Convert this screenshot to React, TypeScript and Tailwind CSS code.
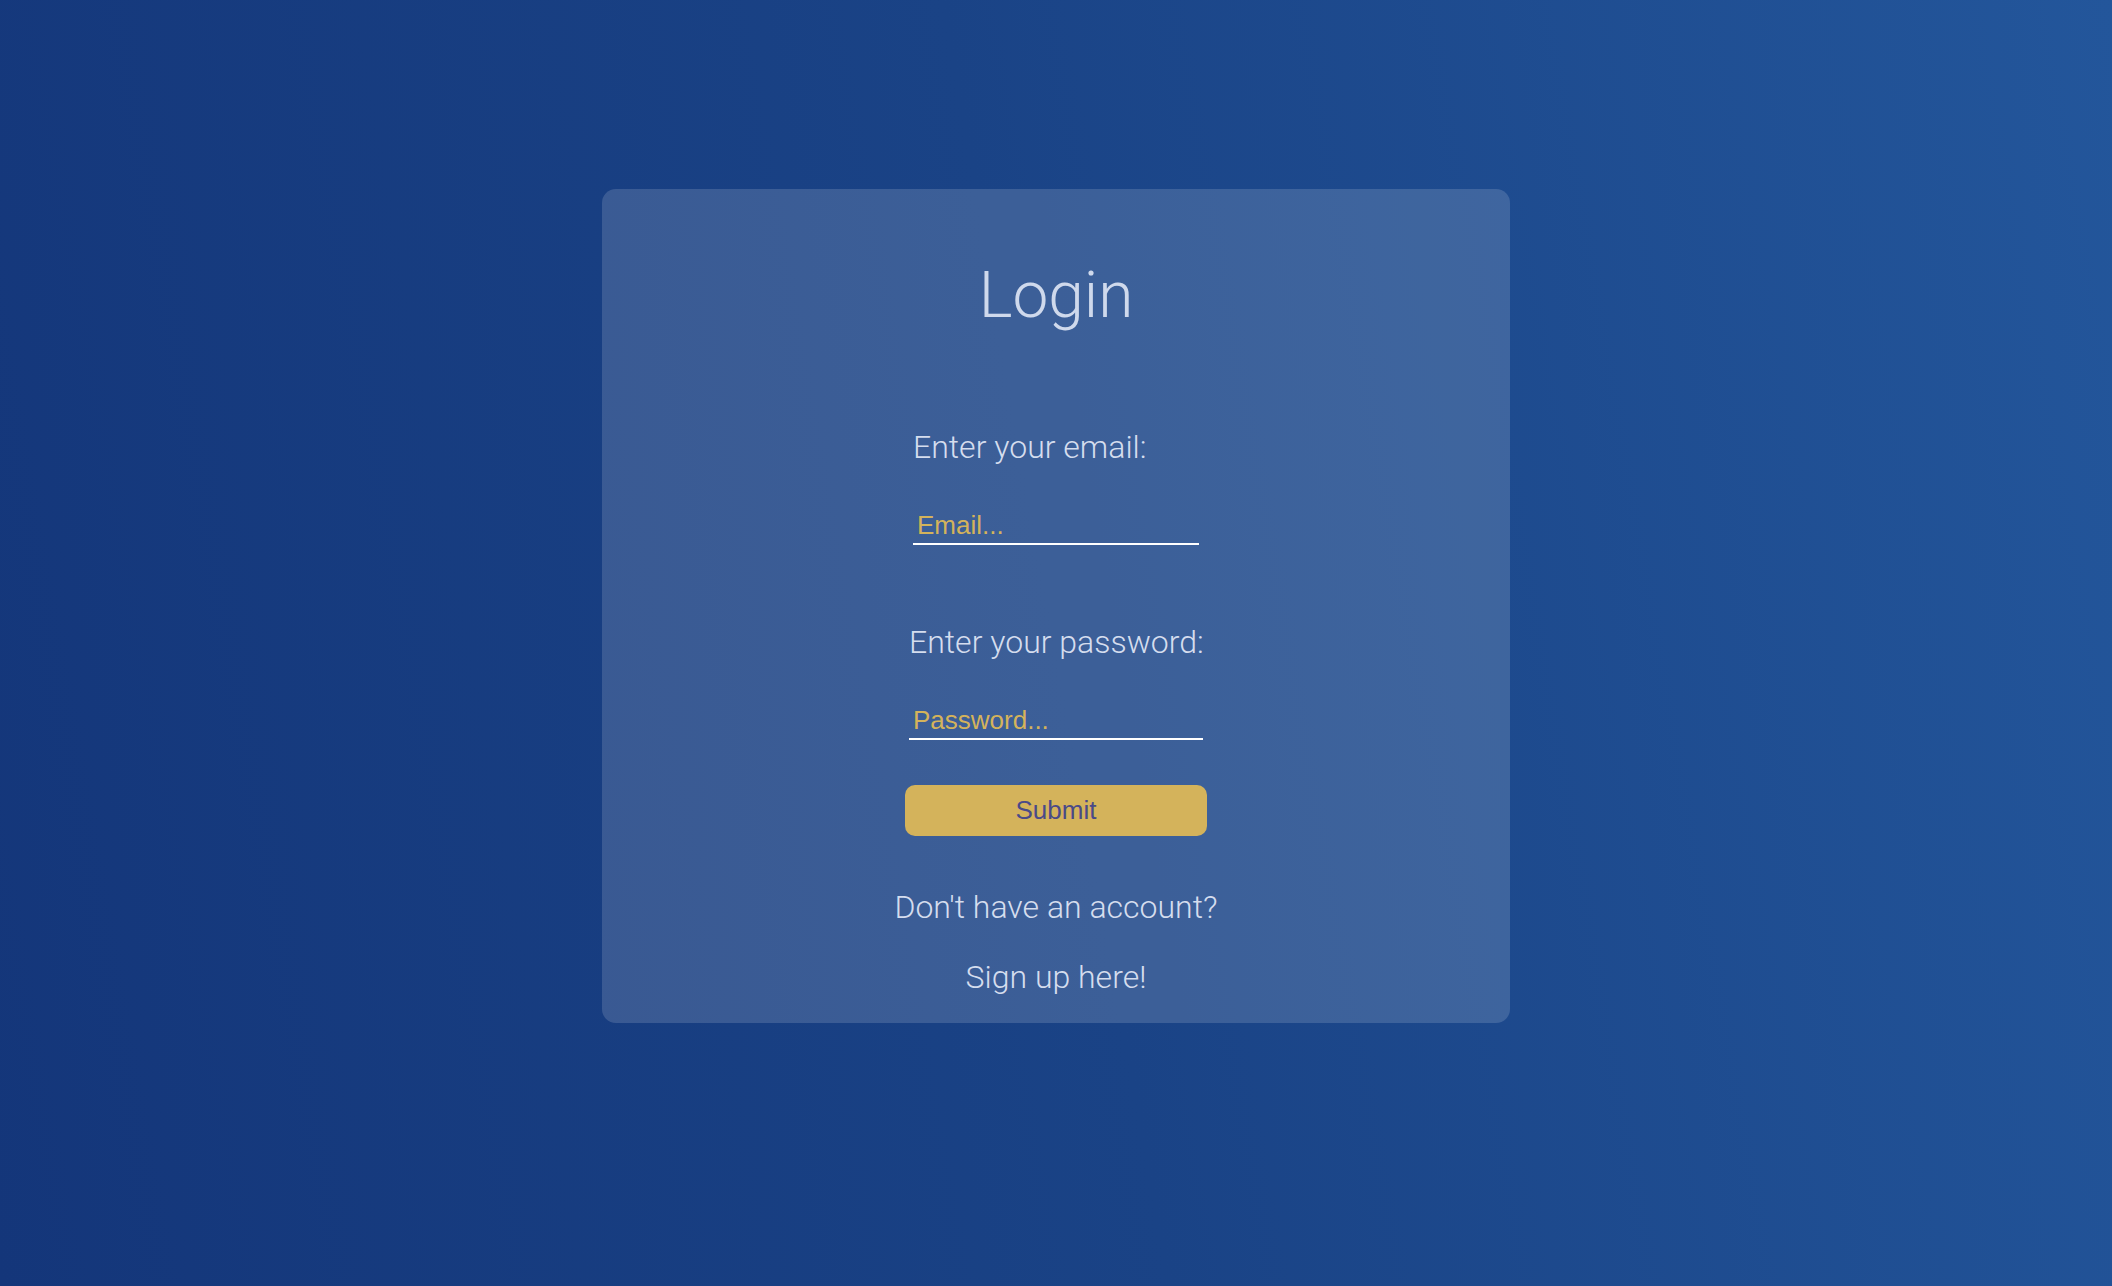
import React from "react";

const roboto = "font-['Roboto',sans-serif]";
const arial = "font-['Liberation_Sans',Arial,sans-serif]";

function Field({ label, type, placeholder, width }: { label: string; type: string; placeholder: string; width: string }) {
  return (
    <div className={`${width} flex flex-col items-start`}>
      <label className={`${roboto} text-[32px] leading-[32px] font-light text-[#d5ddee] whitespace-nowrap`}>{label}</label>
      <input
        type={type}
        placeholder={placeholder}
        className={`${arial} mt-[49px] w-full h-[33px] bg-transparent border-0 border-b-2 border-white pl-[4px] pb-[5px] text-[26px] leading-[26px] text-[#d4b35b] placeholder:text-[#d4b35b] outline-none`}
      />
    </div>
  );
}

export default function App() {
  return (
    <div className="min-h-screen w-full bg-[linear-gradient(80deg,#14367a_0%,#1a4386_50%,#23569b_100%)] flex justify-center pt-[189px]">
      <form
        onSubmit={(e) => e.preventDefault()}
        className="w-[908px] h-[834px] rounded-[14px] bg-white/15 flex flex-col items-center pt-[74px]"
      >
        <h1 className={`${roboto} text-[64px] leading-[66px] font-light text-[#cfd9ec]`}>Login</h1>

        <div className="mt-[102px]">
          <Field label="Enter your email:" type="email" placeholder="Email..." width="w-[286px]" />
        </div>
        <div className="mt-[81px]">
          <Field label="Enter your password:" type="password" placeholder="Password..." width="w-[294px]" />
        </div>

        <button
          type="submit"
          className={`${arial} mt-[45px] w-[302px] h-[51px] pb-[2px] rounded-[10px] bg-[#d4b35b] text-[26px] leading-[26px] text-[#4a4a88]`}
        >
          Submit
        </button>

        <p className={`${roboto} mt-[55px] text-[32px] leading-[32px] font-light text-[#d5ddee]`}>
          Don't have an account?
        </p>
        <a href="#" className={`${roboto} mt-[38px] text-[32px] leading-[32px] font-light text-[#d5ddee]`}>
          Sign up here!
        </a>
      </form>
    </div>
  );
}
